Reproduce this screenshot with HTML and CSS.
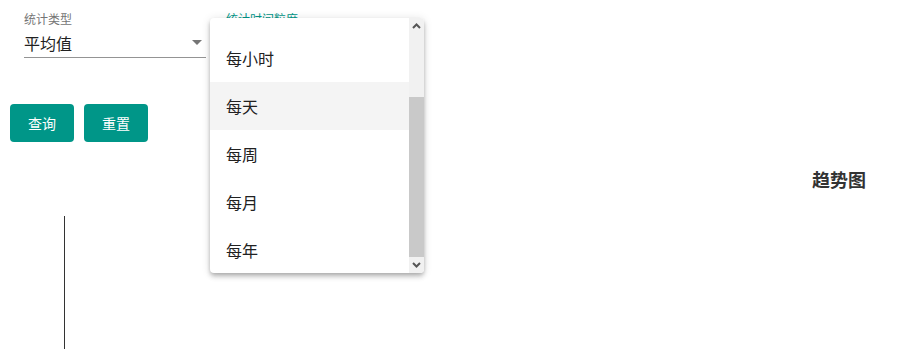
FILE: index.html
```html
<!DOCTYPE html>
<html lang="zh-CN">
<head>
    <meta charset="UTF-8">
    <title>趋势统计</title>
    <link rel="stylesheet" href="styles.css">
</head>
<body>

    <!-- 查询条件 -->
    <div class="filtros">
        <div class="campo">
            <label>统计类型</label>
            <div class="valor">
                <span>平均值</span>
                <i class="flecha"></i>
            </div>
        </div>
        <div class="campo activo">
            <label>统计时间粒度</label>
            <div class="valor">
                <span></span>
                <i class="flecha"></i>
            </div>
        </div>
    </div>

    <div class="acciones">
        <button class="btn">查询</button>
        <button class="btn">重置</button>
    </div>

    <!-- 图表 -->
    <div class="grafico">
        <div class="titulo">趋势图</div>
        <div class="eje"></div>
    </div>

    <!-- 下拉菜单 -->
    <div class="menu">
        <ul class="opciones">
            <li>每小时</li>
            <li class="marcado">每天</li>
            <li>每周</li>
            <li>每月</li>
            <li>每年</li>
        </ul>
        <div class="barra">
            <div class="boton">
                <svg width="9" height="6" viewBox="0 0 9 6"><polyline points="1,5 4.5,1.5 8,5" fill="none" stroke="#555" stroke-width="2"/></svg>
            </div>
            <div class="hueco"></div>
            <div class="pulgar"></div>
            <div class="boton">
                <svg width="9" height="6" viewBox="0 0 9 6"><polyline points="1,1 4.5,4.5 8,1" fill="none" stroke="#555" stroke-width="2"/></svg>
            </div>
        </div>
    </div>

</body>
</html>
```

FILE: styles.css
```css
/* Estilos generales */
body {
    margin: 0;
    padding: 0;
    background: #fff;
    font-family: 'Noto Sans CJK SC', 'Noto Sans', sans-serif;
    color: #212121;
    overflow: hidden;
}

/* Filtros */
.filtros {
    display: flex;
    gap: 20px;
    padding: 10px 0 0 24px;
}

.campo {
    width: 182px;
}

.campo label {
    display: block;
    font-size: 12px;
    line-height: 18px;
    color: #757575;
}

.campo.activo label {
    color: #009688;
}

.valor {
    display: flex;
    align-items: center;
    justify-content: space-between;
    height: 29px;
    font-size: 16px;
    border-bottom: 1px solid #949494;
}

.flecha {
    width: 0;
    height: 0;
    margin-right: 4px;
    border-left: 5px solid transparent;
    border-right: 5px solid transparent;
    border-top: 5px solid #757575;
}

/* Botones */
.acciones {
    display: flex;
    gap: 10px;
    padding: 46px 0 0 10px;
}

.btn {
    width: 64px;
    height: 38px;
    border: none;
    border-radius: 4px;
    background-color: #009688;
    color: #fff;
    font-family: inherit;
    font-size: 14px;
    cursor: pointer;
}

/* Gráfico */
.grafico {
    padding-top: 24px;
}

.titulo {
    text-align: right;
    padding-right: 48px;
    font-size: 18px;
    line-height: 26px;
    font-weight: bold;
    color: #333;
}

.eje {
    margin: 24px 0 0 64px;
    height: 140px;
    border-left: 1px solid #333;
}

/* Menú desplegable */
.menu {
    position: absolute;
    top: 18px;
    left: 210px;
    width: 214px;
    height: 255px;
    display: flex;
    background: #fff;
    border-radius: 4px;
    overflow: hidden;
    box-shadow: 0 2px 4px -1px rgba(0, 0, 0, 0.2), 0 4px 5px 0 rgba(0, 0, 0, 0.14), 0 1px 10px 0 rgba(0, 0, 0, 0.12);
}

.opciones {
    flex: 1;
    margin: 0;
    padding: 16px 0 0;
    list-style: none;
}

.opciones li {
    height: 48px;
    line-height: 48px;
    padding-left: 16px;
    font-size: 16px;
    color: #212121;
}

.opciones li.marcado {
    background-color: #f4f4f4;
}

.barra {
    width: 15px;
    display: flex;
    flex-direction: column;
    background-color: #f1f1f1;
}

.boton {
    height: 16px;
    display: flex;
    align-items: center;
    justify-content: center;
}

.hueco {
    height: 63px;
}

.pulgar {
    flex: 1;
    background-color: #c9c9c9;
}
```
